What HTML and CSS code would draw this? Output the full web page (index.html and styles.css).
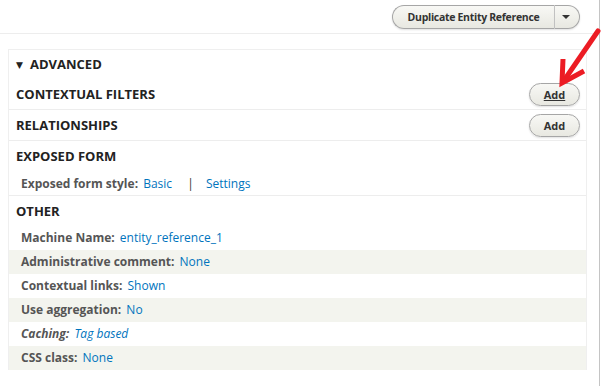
FILE: index.html
```html
<!DOCTYPE html>
<html lang="en">
<head>
  <meta charset="UTF-8" />
  <title>Views - Advanced</title>
  <link rel="stylesheet" href="styles.css">
</head>
<body>
  <div class="page">
    <div class="top-bar">
      <div class="split-btn">
        <button class="btn btn-main">Duplicate Entity Reference</button>
        <button class="btn btn-caret"><span class="caret"></span></button>
      </div>
    </div>

    <div class="panel">
      <div class="legend"><span class="toggle">&#9660;</span>ADVANCED</div>

      <div class="bucket bucket-line">
        <h3>CONTEXTUAL FILTERS</h3>
        <button class="btn btn-add is-hover">Add</button>
      </div>

      <div class="bucket bucket-line">
        <h3>RELATIONSHIPS</h3>
        <button class="btn btn-add">Add</button>
      </div>

      <div class="bucket bucket-exposed">
        <h3>EXPOSED FORM</h3>
        <div class="item">
          <span class="label">Exposed form style:</span>
          <a href="#">Basic</a>
          <span class="pipe">|</span>
          <a href="#">Settings</a>
        </div>
      </div>

      <div class="bucket bucket-other">
        <h3>OTHER</h3>
        <div class="item first"><span class="label">Machine Name:</span> <a href="#">entity_reference_1</a></div>
        <div class="item even"><span class="label">Administrative comment:</span> <a href="#">None</a></div>
        <div class="item"><span class="label">Contextual links:</span> <a href="#">Shown</a></div>
        <div class="item even"><span class="label">Use aggregation:</span> <a href="#">No</a></div>
        <div class="item overridden"><span class="label">Caching:</span> <a href="#">Tag based</a></div>
        <div class="item even"><span class="label">CSS class:</span> <a href="#">None</a></div>
      </div>
    </div>

    <!-- red pointer drawn over the page -->
    <svg class="pointer" width="60" height="70" viewBox="550 25 60 70">
      <path d="M598 31 L565 79" stroke="#ec1c24" stroke-width="5" stroke-linecap="round" fill="none"/>
      <path d="M563 59 L562 83 L584 71" stroke="#ec1c24" stroke-width="5" stroke-linejoin="miter" fill="none"/>
    </svg>
  </div>
</body>
</html>
```

FILE: styles.css
```css
* {
  box-sizing: border-box;
}

body {
  margin: 0;
  background: #fff;
  font-family: "Open Sans", "DejaVu Sans", sans-serif;
  color: #333;
}

.page {
  position: relative;
  width: 600px;
  height: 386px;
  border-right: 1px solid #c4c4c4;
}

.top-bar {
  height: 34px;
  border-bottom: 1px solid #ededed;
  display: flex;
  justify-content: flex-end;
  align-items: flex-start;
  padding-right: 19px;
}

.btn {
  font-family: inherit;
  font-weight: bold;
  font-size: 11px;
  color: #333;
  background: linear-gradient(#f8f8f5, #e8e8e1);
  border: 1px solid #a6a6a6;
  border-radius: 20em;
  box-shadow: 0 1px 2px rgba(0, 0, 0, 0.12);
  cursor: pointer;
}

.split-btn {
  display: flex;
  margin-top: 5px;
}

.btn-main {
  height: 24px;
  width: 163px;
  padding: 0;
  font-size: 10.5px;
  letter-spacing: -0.3px;
  border-radius: 20em 0 0 20em;
  border-right: 1px solid #c8c8c8;
}

.btn-caret {
  height: 24px;
  width: 25px;
  padding: 0;
  border-left: none;
  border-radius: 0 20em 20em 0;
  display: flex;
  align-items: center;
  justify-content: center;
}

.caret {
  width: 0;
  height: 0;
  border-left: 4px solid transparent;
  border-right: 4px solid transparent;
  border-top: 4px solid #333;
  margin-left: -3px;
}

.panel {
  margin: 15px 0 0 8px;
  width: 579px;
  border: 1px solid #efefef;
  border-bottom: none;
}

.legend {
  font-weight: bold;
  font-size: 13px;
  height: 29px;
  line-height: 29px;
  padding-left: 7px;
  color: #222;
}

.toggle {
  display: inline-block;
  font-size: 9px;
  width: 14px;
  vertical-align: top;
}

h3 {
  margin: 0;
  font-size: 13px;
  font-weight: bold;
  color: #222;
}

.bucket {
  padding-left: 7px;
}

.bucket-line {
  display: flex;
  align-items: center;
  justify-content: space-between;
  height: 31px;
  border-bottom: 1px solid #ededed;
  padding-right: 6px;
}

.btn-add {
  width: 51px;
  height: 23px;
  padding: 0;
}

.btn-add.is-hover {
  text-decoration: underline;
}

.bucket > h3 {
  line-height: 31px;
}

.bucket-line > h3 {
  line-height: normal;
}

.bucket-exposed {
  height: 55px;
  border-bottom: 1px solid #ededed;
}

.bucket-other > h3 {
  line-height: 30px;
}

.item {
  font-size: 12px;
  height: 24px;
  line-height: 24px;
  margin-left: -7px;
  padding-left: 12px;
  color: #555;
}

.bucket-exposed .item {
  height: 23px;
  line-height: 23px;
}

.item.even {
  background: #f3f4ee;
}

.label {
  font-weight: bold;
  color: #555;
  margin-right: 2px;
}

.pipe {
  color: #333;
  margin: 0 9px 0 12px;
}

a {
  color: #0074bd;
  text-decoration: none;
}

.overridden {
  font-style: italic;
}

.pointer {
  position: absolute;
  left: 550px;
  top: 25px;
}
```
